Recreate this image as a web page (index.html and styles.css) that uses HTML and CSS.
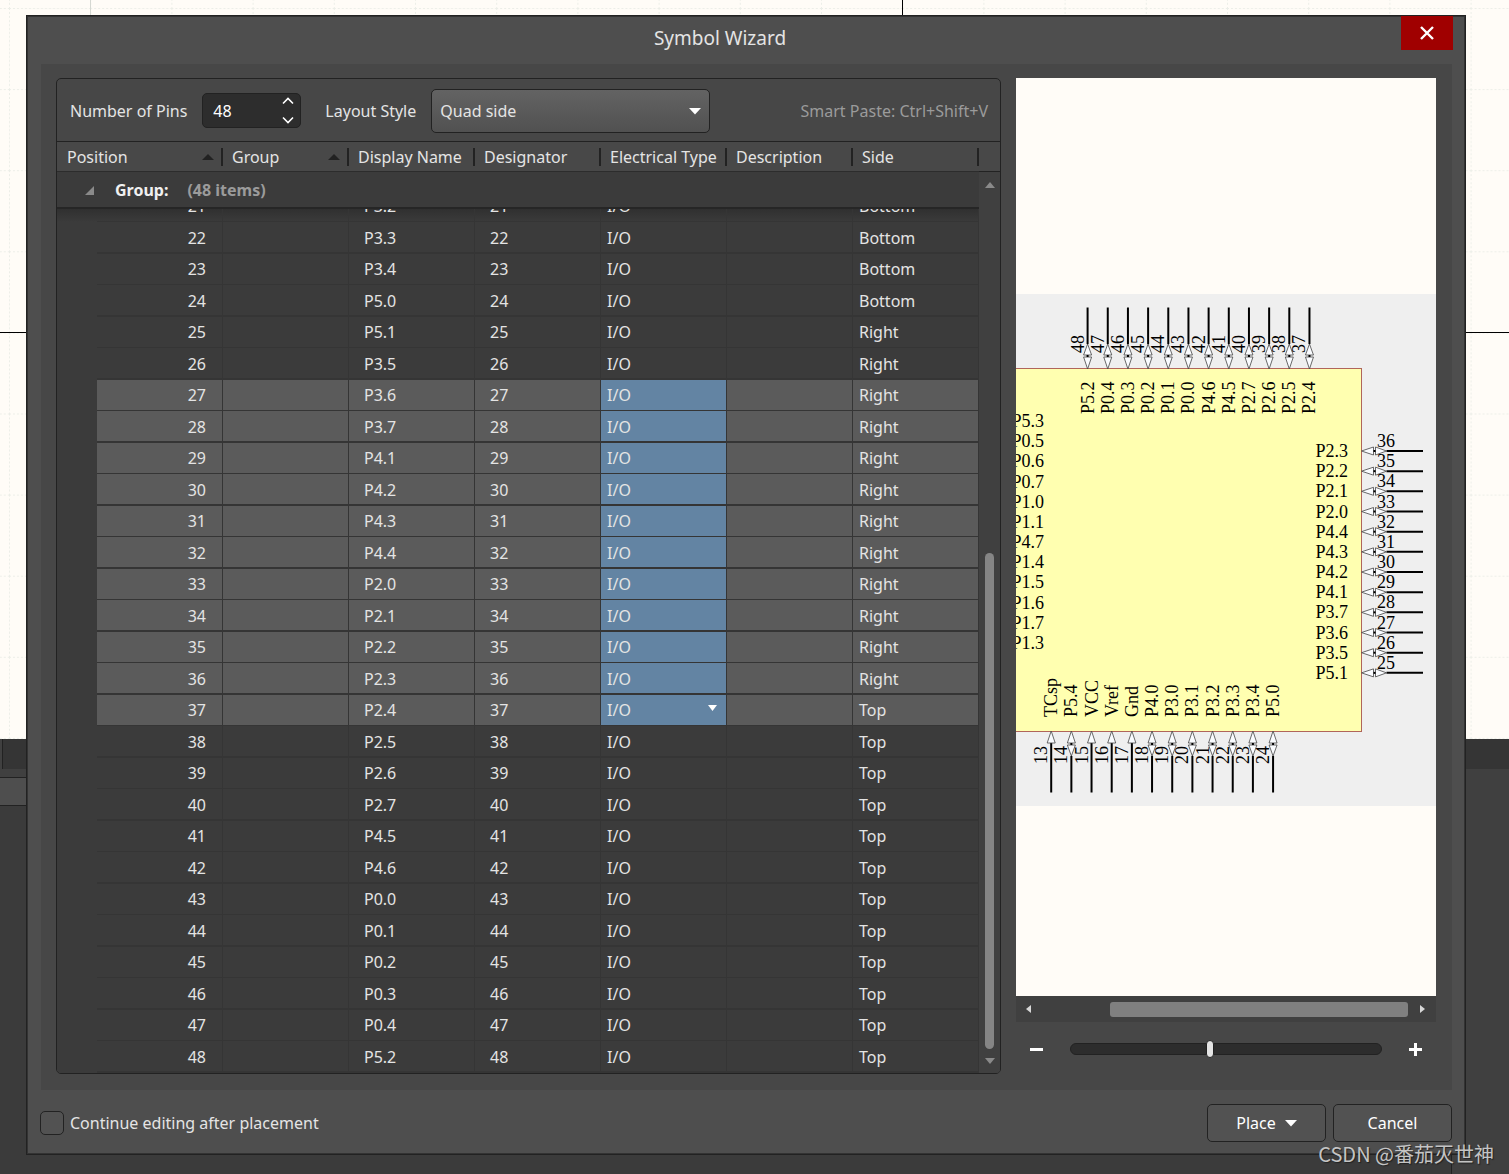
FILE: index.html
```html
<!DOCTYPE html>
<html lang="en">
<head>
  <meta charset="UTF-8">
  <meta name="viewport" content="width=device-width, initial-scale=1.0">
  <title>Symbol Wizard</title>
  <link rel="stylesheet" href="styles.css">
</head>
<body>

<!-- Schematic editor behind the dialog -->
<div class="editor" aria-hidden="true">
  <svg class="sheet">
    <defs>
      <pattern id="grid" x="9" y="8" width="81.2" height="81.1" patternUnits="userSpaceOnUse">
        <path d="M0.5 0V81.1M0 0.5H81.2" stroke="#eceee8" stroke-dasharray="2 2" fill="none"/>
      </pattern>
    </defs>
    <rect width="100%" height="100%" fill="url(#grid)"/>
    <path d="M90.5 0V739" stroke="#d5d8d2"/>
    <path d="M902.5 0V739M0 332.5H2000" stroke="#000"/>
  </svg>
  <div class="tabs"><span class="tab"></span></div>
  <div class="dock">
    <div class="dock-main"><div class="dock-head"></div></div>
    <div class="dock-side"></div>
  </div>
</div>

<main class="dialog" role="dialog" aria-labelledby="title">
  <header class="titlebar">
    <h1 id="title">Symbol Wizard</h1>
    <button class="close" aria-label="Close">
      <svg width="14" height="14" viewBox="0 0 14 14"><path d="M1 1L13 13M13 1L1 13" stroke="#fff" stroke-width="2.4"/></svg>
    </button>
  </header>

  <div class="content">
    <section class="pins">
      <div class="toolbar">
        <label for="pin-count">Number of Pins</label>
        <div class="spin">
          <input type="number" id="pin-count" value="48">
          <div class="steps">
            <button aria-label="More pins"><svg width="12" height="8" viewBox="0 0 12 8"><path d="M1 6.5L6 1.5L11 6.5"/></svg></button>
            <button aria-label="Fewer pins"><svg width="12" height="8" viewBox="0 0 12 8"><path d="M1 1.5L6 6.5L11 1.5"/></svg></button>
          </div>
        </div>
        <label for="layout-style">Layout Style</label>
        <div class="combo">
          <select id="layout-style"><option>Quad side</option></select>
          <svg class="caret" width="12" height="7" viewBox="0 0 12 7"><path d="M0 0H12L6 6.5Z"/></svg>
        </div>
        <span class="hint">Smart Paste: Ctrl+Shift+V</span>
      </div>

      <div class="list">
        <table>
          <colgroup><col><col class="c"><col class="c"><col class="c"><col class="c"><col class="c"><col class="c"></colgroup>
          <thead>
            <tr>
              <th><div>Position<svg width="12" height="6" viewBox="0 0 12 6"><path d="M0 6L6 0L12 6Z"/></svg></div></th>
              <th><div>Group<svg width="12" height="6" viewBox="0 0 12 6"><path d="M0 6L6 0L12 6Z"/></svg></div></th>
              <th><div>Display Name</div></th>
              <th><div>Designator</div></th>
              <th><div>Electrical Type</div></th>
              <th><div>Description</div></th>
              <th><div>Side</div></th>
            </tr>
            <tr class="group">
              <td colspan="7"><div><svg width="9" height="9" viewBox="0 0 9 9"><path d="M9 0V9H0Z"/></svg><b>Group:</b><b class="count">(48 items)</b></div></td>
            </tr>
          </thead>
          <tbody id="rows"></tbody>
        </table>
        <div class="vscroll">
          <div class="corner"></div>
          <div class="rail">
            <svg width="10" height="6" viewBox="0 0 10 6"><path d="M0 6L5 0L10 6Z"/></svg>
            <span class="before"></span>
            <span class="thumb"></span>
            <svg width="10" height="6" viewBox="0 0 10 6"><path d="M0 0H10L5 6Z"/></svg>
          </div>
        </div>
      </div>
    </section>

    <section class="preview">
      <svg class="canvas" id="canvas" viewBox="0 0 420 918" role="img" aria-label="Symbol preview"></svg>
      <div class="hscroll">
        <svg width="5" height="8" viewBox="0 0 5 8"><path d="M5 0V8L0 4Z"/></svg>
        <span class="before"></span>
        <span class="thumb"></span>
        <svg width="5" height="8" viewBox="0 0 5 8"><path d="M0 0V8L5 4Z"/></svg>
      </div>
      <div class="zoom">
        <button aria-label="Zoom out"><svg width="13" height="13" viewBox="0 0 13 13"><path d="M0 6.5H13"/></svg></button>
        <input type="range" min="0" max="1000" value="446" aria-label="Zoom">
        <button aria-label="Zoom in"><svg width="13" height="13" viewBox="0 0 13 13"><path d="M0 6.5H13M6.5 0V13"/></svg></button>
      </div>
    </section>
  </div>

  <footer class="actions">
    <label class="check"><input type="checkbox">Continue editing after placement</label>
    <button class="btn">Place<svg width="12" height="7" viewBox="0 0 12 7"><path d="M0 0H12L6 6.5Z"/></svg></button>
    <button class="btn">Cancel</button>
  </footer>
</main>

<div class="watermark">CSDN @番茄灭世神</div>

<script>
  // names of pins 1..48
  const names = [
    'P5.3','P0.5','P0.6','P0.7','P1.0','P1.1','P4.7','P1.4','P1.5','P1.6','P1.7','P1.3',
    'TCsp','P5.4','VCC','Vref','Gnd','P4.0','P3.0','P3.1','P3.2','P3.3','P3.4','P5.0',
    'P5.1','P3.5','P3.6','P3.7','P4.1','P4.2','P4.3','P4.4','P2.0','P2.1','P2.2','P2.3',
    'P2.4','P2.5','P2.6','P2.7','P4.5','P4.6','P0.0','P0.1','P0.2','P0.3','P0.4','P5.2'
  ];
  const inputs = [13, 15, 16, 17];

  function sideOf(n) {
    return n <= 12 ? 'Left' : n <= 24 ? 'Bottom' : n <= 36 ? 'Right' : 'Top';
  }

  // Table, scrolled down to pin 21
  let html = '';
  for (let n = 21; n <= 48; n++) {
    let type = 'I/O';
    if (n === 37) {
      type = '<span class="cell-combo"><select aria-label="Electrical type"><option>I/O</option></select>' +
             '<svg width="9" height="6" viewBox="0 0 9 6"><path d="M0 0H9L4.5 6Z"/></svg></span>';
    }
    const cls = n === 21 ? 'clipped' : n >= 27 && n <= 37 ? 'sel' : '';
    const cells = [n, '', names[n - 1], n, type, '', sideOf(n)];
    html += '<tr class="' + cls + '">' + cells.map(c => '<td><div>' + c + '</div></td>').join('') + '</tr>';
  }
  document.getElementById('rows').innerHTML = html;

  // Symbol preview
  const step = 20.17;
  // pin drawn below its tip, rotated for the other sides
  function pin(x, y, angle, both) {
    const head = '<path class="arrow" d="M0 0L4 12H-4Z"/>';
    const tail = both ? '<path class="arrow" d="M-4 14H4L0 25Z"/><path class="dot" d="M-1 13H1"/>' : '';
    return '<g transform="translate(' + x + ' ' + y + ') rotate(' + angle + ')">' +
      '<path class="wire" d="M0 ' + (both ? 25 : 12) + 'V61.5"/>' + head + tail + '</g>';
  }
  function text(x, y, str, turned, anchor) {
    return '<text transform="translate(' + x + ' ' + y + ')' + (turned ? ' rotate(-90)' : '') +
      '" text-anchor="' + (anchor || 'start') + '">' + str + '</text>';
  }

  let svg = '<rect class="paper" y="216" width="420" height="512"/>' +
            '<rect class="body" x="-20.5" y="290.5" width="366" height="363"/>';
  for (let i = 0; i < 12; i++) {
    // left
    svg += text(28, 349 + i * step, names[i], false, 'end');
    // bottom
    const b = 13 + i, bx = 35.2 + i * step;
    svg += pin(bx, 653, 0, !inputs.includes(b));
    svg += text(bx - 4, 686, b, true) + text(bx + 6, 639, names[b - 1], true);
    // right
    const r = 36 - i, ry = 373 + i * step;
    svg += pin(345.5, ry, -90, true);
    svg += text(361, ry - 4, r) + text(332, ry + 6, names[r - 1], false, 'end');
    // top
    const t = 48 - i, tx = 71.6 + i * step;
    svg += pin(tx, 291, 180, true);
    svg += text(tx - 4, 275, t, true) + text(tx + 6, 336, names[t - 1], true);
  }
  document.getElementById('canvas').innerHTML = svg;
</script>

</body>
</html>
```
FILE: styles.css
```css
* { box-sizing: border-box; }
body {
  margin: 0;
  min-height: 100vh;
  display: flex;
  padding: 15px 43px 19px 26px;
  background: #3b3b3b;
  color: #e4e4e4;
  font: 16px/22px "Noto Sans", "Open Sans", sans-serif;
}
button, input, select { font: inherit; color: inherit; margin: 0; }
button { background: none; border: none; padding: 0; display: flex; align-items: center; justify-content: center; cursor: pointer; }
select { appearance: none; background: none; border: none; outline: none; }

/* Editor window in the back */
.editor { position: absolute; inset: 0; display: flex; flex-direction: column; overflow: hidden; }
.sheet { display: block; width: 100%; height: 739px; background: #fffcf7; flex: none; }
.tabs { height: 30px; background: #353535; flex: none; display: flex; }
.tab { width: 3px; background: #404040; border-right: 1px solid #222; }
.dock { flex: 1; display: flex; background: #404040; }
.dock-main { flex: 1; background: #3b3b3b; border-right: 1px solid #222; border-top: 8px solid #404040; }
.dock-head { height: 29px; background: #4e4e4e; border-top: 1px solid #222; border-bottom: 1px solid #222; }
.dock-side { width: 57px; }

/* Dialog */
.dialog {
  position: relative;
  flex: 1;
  display: flex;
  flex-direction: column;
  background: #4e4e4e;
  border: 1px solid #222;
  box-shadow: inset 0 0 0 1px #333;
}
.titlebar { display: flex; height: 48px; padding: 0 12px; flex: none; }
.titlebar h1 { flex: 1; margin: 0; text-align: center; font-size: 19px; font-weight: 400; line-height: 44px; }
.close { width: 52px; height: 34px; background: #a00000; }

.content { flex: 1; display: flex; gap: 15px; margin: 0 13px 0 14px; padding: 14px 16px 16px 15px; background: #474747; }

/* Pin table */
.pins { flex: 1; display: flex; flex-direction: column; border: 1px solid #222; border-radius: 5px; overflow: hidden; }
.toolbar { display: flex; align-items: center; height: 63px; padding: 1px 12px 0 13px; border-bottom: 1px solid #222; }
.spin { display: flex; width: 99px; height: 35px; margin: 0 24px 0 15px; background: #2d2d2d; border: 1px solid #222; border-radius: 5px; }
.spin input { flex: 1; min-width: 0; padding: 0 0 0 10px; background: none; border: none; outline: none; color: #fff; appearance: textfield; }
.spin input::-webkit-inner-spin-button { appearance: none; }
.steps { width: 24px; display: flex; flex-direction: column; justify-content: space-between; padding: 3px 0; }
.steps path { fill: none; stroke: #fff; stroke-width: 1.6; }
.combo { position: relative; width: 279px; height: 44px; margin-left: 15px; }
.combo select { width: 100%; height: 100%; padding: 0 8px; background: linear-gradient(#636363, #515151); border: 1px solid #222; border-radius: 5px; }
.caret { position: absolute; right: 9px; top: 19px; fill: #fff; pointer-events: none; }
.hint { margin-left: auto; color: #9b9b9b; }

.list { flex: 1; display: flex; background: #3b3b3b; }
table { flex: 1; border-spacing: 0; table-layout: fixed; }
.c { width: 126px; }
th { height: 30px; padding: 0; background: #484848; border-bottom: 1px solid #2c2c2c; font-weight: 400; text-align: left; white-space: nowrap; }
th div { display: flex; align-items: center; justify-content: space-between; height: 18px; padding: 0 7px 0 9px; border-right: 2px solid #222; line-height: 18px; }
th:first-child div { padding-left: 10px; }
th svg { fill: #222; }
.group td { padding: 0; border-bottom: 2px solid #262626; }
.group div { display: flex; align-items: center; height: 35px; padding: 1px 0 0 28px; }
.group svg { fill: #8a8a8a; margin-right: 21px; }
.group b { color: #f0f0f0; }
.group .count { margin-left: 19px; color: #9b9b9b; }

tbody td { padding: 0; border-right: 1px solid #353535; }
tbody td div { height: 31px; padding: 0 6px; line-height: 31px; border-bottom: 1px solid #353535; }
tbody tr:nth-child(even) td div { height: 32px; border-bottom-width: 2px; line-height: 32px; }
tbody td:first-child div { margin-left: 40px; padding-right: 16px; text-align: right; }
tbody td:nth-child(3) div, tbody td:nth-child(4) div { padding-left: 15px; }
tbody .sel div { background: #5b5b5b; }
tbody .sel td:nth-child(5) div { background: #6384a3; }
/* row scrolled half under the group header */
tbody .clipped td { background: linear-gradient(#303030, #3b3b3b); }
tbody .clipped td div { display: flex; align-items: flex-end; height: 13px; overflow: hidden; line-height: 30px; }
tbody .clipped td:first-child div { justify-content: flex-end; }
.cell-combo { position: relative; display: block; }
.cell-combo select { display: block; width: 100%; height: 30px; padding: 0; }
.cell-combo svg { position: absolute; right: 3px; top: 10px; fill: #fff; pointer-events: none; }

.vscroll { display: flex; flex-direction: column; width: 21px; background: #404040; }
.corner { height: 30px; background: #484848; border-bottom: 1px solid #222; }
.rail { flex: 1; display: flex; flex-direction: column; align-items: center; padding: 10px 0 9px; }
.rail svg { fill: #8a8a8a; }
.rail .before { flex: 363; }
.rail .thumb { flex: 494; width: 9px; margin-bottom: 9px; border-radius: 5px; background: #858585; }

/* Preview */
.preview { width: 420px; display: flex; flex-direction: column; }
.canvas { display: block; width: 100%; flex: 1; background: #fffcf7; }
.canvas .paper { fill: #efefef; }
.canvas .body { fill: #ffffb0; stroke: #b0655a; }
.canvas .wire { stroke: #000; stroke-width: 2; }
.canvas .arrow { fill: #fafcff; stroke: #444; stroke-width: 0.8; }
.canvas .dot { stroke: #000; stroke-width: 2; }
.canvas text { font: 18px "Liberation Serif", serif; fill: #000; }
.hscroll { display: flex; align-items: center; height: 26px; padding: 0 11px 0 10px; background: #404040; }
.hscroll svg { fill: #d8d8d8; }
.hscroll .before { flex: 79; }
.hscroll .thumb { flex: 299; height: 15px; margin-right: 12px; border-radius: 3px; background: #808080; }
.zoom { display: flex; align-items: center; justify-content: space-between; height: 52px; padding: 2px 14px 0; }
.zoom path { stroke: #fff; stroke-width: 3; }
.zoom input { flex: 1; height: 18px; margin: 0 27px; appearance: none; background: none; }
.zoom input::-webkit-slider-runnable-track { height: 12px; background: #2d2d2d; border: 1px solid #222; border-radius: 6px; }
.zoom input::-webkit-slider-thumb { appearance: none; width: 8px; height: 18px; margin-top: -4px; background: #e4e4e4; border: 1px solid #222; border-radius: 4px; }

/* Footer */
.actions { display: flex; align-items: center; gap: 7px; height: 64px; padding: 2px 13px 0; flex: none; }
.check { display: flex; align-items: center; gap: 6px; margin-right: auto; }
.check input { appearance: none; width: 24px; height: 24px; border: 1px solid #222; border-radius: 5px; background: #525252; }
.btn { width: 119px; height: 38px; gap: 9px; background: #525252; border: 1px solid #222; border-radius: 5px; color: #fff; }
.btn svg { fill: #fff; }

.watermark {
  position: absolute;
  right: 15px;
  bottom: 6px;
  color: #c4c4c4;
  font: 20px/28px "Noto Sans CJK SC", sans-serif;
  text-shadow: 1px 1px 1px #222;
}
```
